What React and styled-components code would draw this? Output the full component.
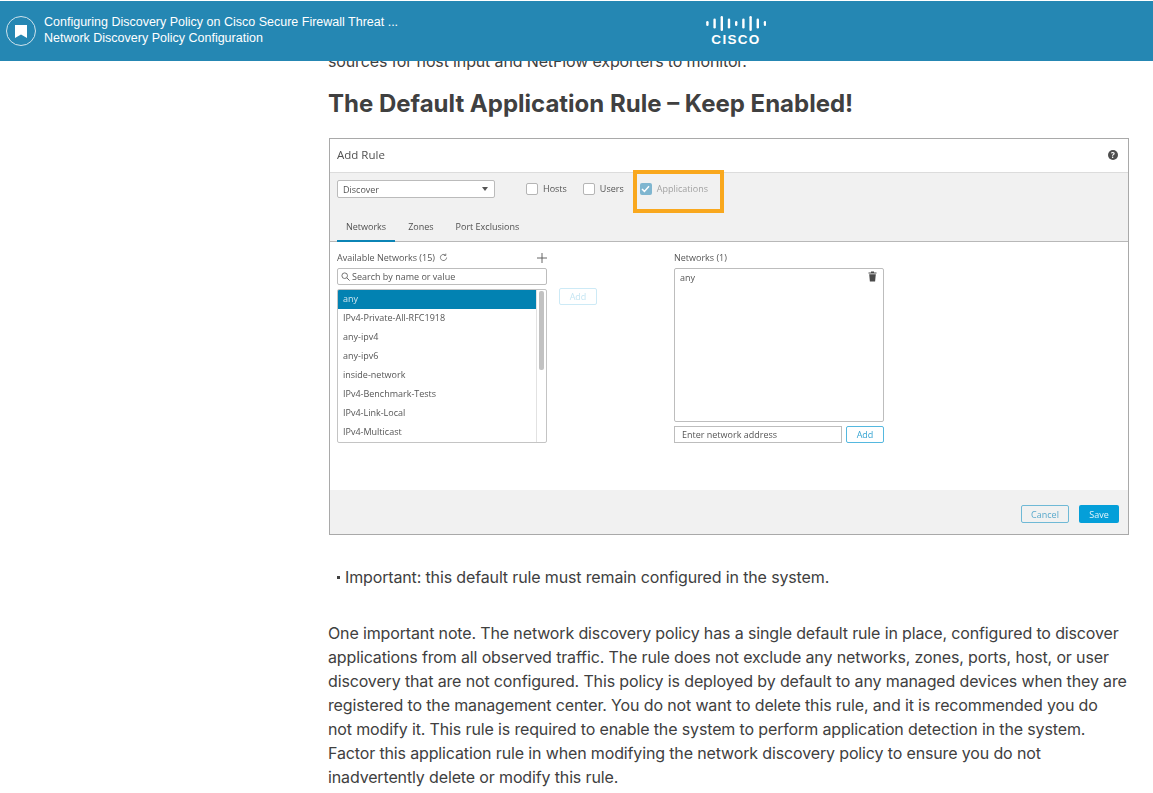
import React from "react";
import styled, { createGlobalStyle } from "styled-components";

const GlobalStyle = createGlobalStyle`
  html, body {
    margin: 0;
    padding: 0;
    background: #fff;
    overflow: hidden;
  }
  body {
    font-family: Inter, "Liberation Sans", sans-serif;
    color: #404040;
  }
`;

const TopBar = styled.header`
  position: fixed;
  top: 1px;
  left: 0;
  right: 0;
  height: 60px;
  background: #2587b3;
  display: flex;
  align-items: center;
  color: #fff;
  z-index: 5;
`;
const BookmarkCircle = styled.div`
  width: 28px;
  height: 28px;
  margin-left: 6px;
  border: 1px solid #cfe3ec;
  border-radius: 50%;
  display: flex;
  align-items: center;
  justify-content: center;
`;
const TopTitles = styled.div`
  margin-left: 8px;
  width: 370px;
  font-family: "Liberation Sans", Arial, sans-serif;
  font-size: 12.5px;
  line-height: 16px;
  padding-bottom: 3px;
`;
const TopTitle = styled.div`
  white-space: nowrap;
`;
const LogoSlot = styled.div`
  position: absolute;
  left: 706px;
  top: 14px;
  width: 60px;
  display: flex;
  flex-direction: column;
  align-items: center;
`;
const LogoWord = styled.div`
  font-family: "Liberation Sans", Arial, sans-serif;
  font-weight: 700;
  font-size: 13.5px;
  line-height: 14px;
  letter-spacing: 1.3px;
  margin-top: 1px;
`;

const Article = styled.main`
  width: 801px;
  margin-left: 328px;
  padding-top: 49px;
`;
const Paragraph = styled.p`
  margin: 0;
  font-size: 16px;
  line-height: 24px;
  letter-spacing: -0.14px;
  color: #404040;
`;
const Heading = styled.h2`
  margin: 7px 0 0;
  font-size: 24px;
  line-height: 48px;
  font-weight: 700;
  color: #404040;
`;
const BulletLine = styled(Paragraph)`
  margin-top: 30px;
  padding-left: 9px;
  display: flex;
  align-items: center;
  gap: 5px;
`;
const BulletMark = styled.span`
  width: 3px;
  height: 3px;
  background: #404040;
  flex: none;
`;
const Note = styled(Paragraph)`
  margin-top: 32px;
`;

const Shot = styled.figure`
  margin: 10px 0 0 1px;
  height: 397px;
  box-sizing: border-box;
  border: 1px solid #a9a9a9;
  display: flex;
  flex-direction: column;
  background: #fff;
  font-family: "Open Sans", Lato, sans-serif;
  font-size: 9px;
  color: #555;
  position: relative;
  filter: blur(0.3px);
`;
const ShotHeader = styled.div`
  height: 34px;
  flex: none;
  box-sizing: border-box;
  padding: 0 10px 2px 7px;
  display: flex;
  align-items: center;
  justify-content: space-between;
  font-size: 11.5px;
  color: #505050;
  border-bottom: 1px solid #dcdcdc;
`;
const HelpDot = styled.span`
  width: 10px;
  height: 10px;
  border-radius: 50%;
  background: #4e4e4e;
  color: #fff;
  font-size: 8px;
  line-height: 10px;
  font-weight: 700;
  text-align: center;
`;
const ShotToolbar = styled.div`
  height: 68px;
  flex: none;
  background: #f1f1f1;
  border-bottom: 1px solid #b8b8b8;
  display: flex;
  flex-direction: column;
  position: relative;
`;
const FilterRow = styled.div`
  padding: 7px 0 0 7px;
  height: 18px;
  display: flex;
  align-items: center;
`;
const SelectBox = styled.div`
  width: 158px;
  height: 18px;
  box-sizing: border-box;
  background: #fff;
  border: 1px solid #bbb;
  border-radius: 2px;
  padding: 0 6px 0 5px;
  margin-right: 31px;
  display: flex;
  align-items: center;
  justify-content: space-between;
`;
const Caret = styled.span`
  width: 0;
  height: 0;
  border-left: 3px solid transparent;
  border-right: 3px solid transparent;
  border-top: 4px solid #555;
`;
const CheckLabel = styled.label`
  display: flex;
  align-items: center;
  gap: 5px;
  margin-right: 16px;
  padding-bottom: 1px;
  color: ${(p) => (p.$muted ? "#a2a2a2" : "#555")};
`;
const CheckBox = styled.span`
  width: 12px;
  height: 12px;
  box-sizing: border-box;
  background: ${(p) => (p.$checked ? "#7fb6d0" : "#fff")};
  border: ${(p) => (p.$checked ? "0" : "1px solid #b5b5b5")};
  border-radius: 2px;
  display: flex;
  align-items: center;
  justify-content: center;
`;
const Highlight = styled.div`
  position: absolute;
  left: 303px;
  top: -3px;
  width: 91px;
  height: 43px;
  box-sizing: border-box;
  border: 4px solid #f9a81e;
`;
const Tabs = styled.div`
  margin-top: 18px;
  padding-left: 7px;
  display: flex;
  align-self: stretch;
  flex: 1;
`;
const Tab = styled.div`
  padding: 0 9px 3px;
  margin-right: 4px;
  display: flex;
  align-items: center;
  border-bottom: 2px solid ${(p) => (p.$active ? "#0b84b5" : "transparent")};
  margin-bottom: -1px;
  color: #505050;
`;

const ShotBody = styled.div`
  flex: 1;
  display: flex;
  padding: 9px 0 0 7px;
`;
const Column = styled.div`
  width: 210px;
  flex: none;
  display: flex;
  flex-direction: column;
`;
const ColumnLabel = styled.div`
  height: 17px;
  box-sizing: border-box;
  padding-bottom: 4px;
  display: flex;
  align-items: center;
  justify-content: space-between;
  line-height: 12px;
`;
const LabelLeft = styled.span`
  display: flex;
  align-items: center;
  gap: 4px;
`;
const SearchBox = styled.div`
  height: 17px;
  box-sizing: border-box;
  border: 1px solid #bdbdbd;
  border-radius: 2px;
  display: flex;
  align-items: center;
  gap: 2px;
  padding: 0 0 1px 3px;
`;
const NetworkList = styled.div`
  margin-top: 4px;
  height: 154px;
  box-sizing: border-box;
  border: 1px solid #c4c4c4;
  border-radius: 2px;
  display: flex;
  overflow: hidden;
`;
const ListRows = styled.div`
  flex: 1;
`;
const ListRow = styled.div`
  height: 19px;
  line-height: 17px;
  padding-left: 5px;
  background: ${(p) => (p.$selected ? "#0282b2" : "transparent")};
  color: ${(p) => (p.$selected ? "#cfe6f0" : "#555")};
`;
const ScrollTrack = styled.div`
  width: 10px;
  flex: none;
  border-left: 1px solid #e2e2e2;
  padding: 1px 2px 0;
  box-sizing: border-box;
`;
const ScrollThumb = styled.div`
  height: 79px;
  background: #c2c2c2;
  border-radius: 2px;
`;
const GhostButton = styled.div`
  width: ${(p) => p.$w || 38}px;
  height: ${(p) => p.$h || 17}px;
  box-sizing: border-box;
  border: 1px solid ${(p) => p.$line || "#55b8df"};
  border-radius: 2px;
  color: ${(p) => p.$ink || "#38a5d2"};
  display: flex;
  align-items: center;
  justify-content: center;
`;
const MiddleGap = styled.div`
  width: 127px;
  flex: none;
  padding: 37px 0 0 12px;
  box-sizing: border-box;
`;
const ChosenBox = styled.div`
  height: 154px;
  box-sizing: border-box;
  border: 1px solid #bdbdbd;
  border-radius: 2px;
  padding: 2px 6px 3px 5px;
  display: flex;
  justify-content: space-between;
`;
const AddressRow = styled.div`
  margin-top: 4px;
  display: flex;
  justify-content: space-between;
`;
const AddressInput = styled.div`
  width: 168px;
  height: 17px;
  box-sizing: border-box;
  border: 1px solid #bdbdbd;
  padding-left: 7px;
  display: flex;
  align-items: center;
`;
const ShotFooter = styled.div`
  height: 44px;
  flex: none;
  background: #f1f1f1;
  display: flex;
  align-items: center;
  justify-content: flex-end;
  gap: 10px;
  padding: 4px 9px 0 0;
  box-sizing: border-box;
`;
const SaveButton = styled.div`
  width: 40px;
  height: 18px;
  background: #049fd9;
  border-radius: 2px;
  color: #e6f6fc;
  display: flex;
  align-items: center;
  justify-content: center;
`;

const networks = [
  "any",
  "IPv4-Private-All-RFC1918",
  "any-ipv4",
  "any-ipv6",
  "inside-network",
  "IPv4-Benchmark-Tests",
  "IPv4-Link-Local",
  "IPv4-Multicast",
];

const ciscoBars = [5, 10, 15, 10, 5, 10, 15, 10, 5];

function CiscoBars() {
  return (
    <svg width="60" height="17" viewBox="0 0 60 17">
      {ciscoBars.map((h, i) => (
        <rect
          key={i}
          x={i * 7.2 + 0.2}
          y={(17 - h) / 2}
          width="2.4"
          height={h}
          rx="1.2"
          fill="#fff"
        />
      ))}
    </svg>
  );
}

export default function App() {
  return (
    <>
      <GlobalStyle />
      <TopBar>
        <BookmarkCircle>
          <svg width="12" height="13" viewBox="0 0 12 13">
            <path d="M0 0h12v13L6 9.5 0 13z" fill="#fff" />
          </svg>
        </BookmarkCircle>
        <TopTitles>
          <TopTitle>
            Configuring Discovery Policy on Cisco Secure Firewall Threat ...
          </TopTitle>
          <TopTitle>Network Discovery Policy Configuration</TopTitle>
        </TopTitles>
        <LogoSlot>
          <CiscoBars />
          <LogoWord>CISCO</LogoWord>
        </LogoSlot>
      </TopBar>

      <Article>
        <Paragraph>
          sources for host input and NetFlow exporters to monitor.
        </Paragraph>
        <Heading>The Default Application Rule – Keep Enabled!</Heading>

        <Shot>
          <ShotHeader>
            Add Rule
            <HelpDot>?</HelpDot>
          </ShotHeader>
          <ShotToolbar>
            <FilterRow>
              <SelectBox>
                Discover
                <Caret />
              </SelectBox>
              <CheckLabel>
                <CheckBox />
                Hosts
              </CheckLabel>
              <CheckLabel>
                <CheckBox />
                Users
              </CheckLabel>
              <CheckLabel $muted>
                <CheckBox $checked>
                  <svg width="9" height="8" viewBox="0 0 9 8">
                    <path
                      d="M1 4l2.4 2.4L8 1.2"
                      fill="none"
                      stroke="#fff"
                      strokeWidth="1.5"
                    />
                  </svg>
                </CheckBox>
                Applications
              </CheckLabel>
            </FilterRow>
            <Highlight />
            <Tabs>
              <Tab $active>Networks</Tab>
              <Tab>Zones</Tab>
              <Tab>Port Exclusions</Tab>
            </Tabs>
          </ShotToolbar>

          <ShotBody>
            <Column>
              <ColumnLabel>
                <LabelLeft>
                  Available Networks (15)
                  <svg width="9" height="9" viewBox="0 0 9 9">
                    <path
                      d="M7.6 4.5a3.1 3.1 0 1 1-1-2.3M6.8 0.6v1.9H4.9"
                      fill="none"
                      stroke="#666"
                      strokeWidth="0.8"
                    />
                  </svg>
                </LabelLeft>
                <svg width="10" height="10" viewBox="0 0 10 10">
                  <path d="M5 0v10M0 5h10" stroke="#555" strokeWidth="0.9" />
                </svg>
              </ColumnLabel>
              <SearchBox>
                <svg width="9" height="9" viewBox="0 0 9 9">
                  <circle cx="3.7" cy="3.7" r="2.8" fill="none" stroke="#666" strokeWidth="0.9" />
                  <path d="M5.8 5.8L8.6 8.6" stroke="#666" strokeWidth="1" />
                </svg>
                Search by name or value
              </SearchBox>
              <NetworkList>
                <ListRows>
                  {networks.map((name, i) => (
                    <ListRow key={name} $selected={i === 0}>
                      {name}
                    </ListRow>
                  ))}
                </ListRows>
                <ScrollTrack>
                  <ScrollThumb />
                </ScrollTrack>
              </NetworkList>
            </Column>

            <MiddleGap>
              <GhostButton $line="#cdeaf6" $ink="#c6e6f3">
                Add
              </GhostButton>
            </MiddleGap>

            <Column>
              <ColumnLabel>Networks (1)</ColumnLabel>
              <ChosenBox>
                any
                <svg width="9" height="11" viewBox="0 0 9 11">
                  <path d="M0.5 1.6h8v1H0.5zM3 0.4h3v1H3z" fill="#4a4a4a" />
                  <path d="M1.2 3.2h6.6l-0.7 7.4H1.9z" fill="#4a4a4a" />
                </svg>
              </ChosenBox>
              <AddressRow>
                <AddressInput>Enter network address</AddressInput>
                <GhostButton>Add</GhostButton>
              </AddressRow>
            </Column>
          </ShotBody>

          <ShotFooter>
            <GhostButton $w={48} $h={18} $line="#6fb9d6" $ink="#5aa9cc">
              Cancel
            </GhostButton>
            <SaveButton>Save</SaveButton>
          </ShotFooter>
        </Shot>

        <BulletLine>
          <BulletMark />
          Important: this default rule must remain configured in the system.
        </BulletLine>

        <Note>
          One important note. The network discovery policy has a single default
          rule in place, configured to discover applications from all observed
          traffic. The rule does not exclude any networks, zones, ports, host,
          or user discovery that are not configured. This policy is deployed by
          default to any managed devices when they are registered to the
          management center. You do not want to delete this rule, and it is
          recommended you do
          <br />
          not modify it. This rule is required to enable the system to perform
          application detection in the system.
          <br />
          Factor this application rule in when modifying the network discovery
          policy to ensure you do not
          <br />
          inadvertently delete or modify this rule.
        </Note>
      </Article>
    </>
  );
}
